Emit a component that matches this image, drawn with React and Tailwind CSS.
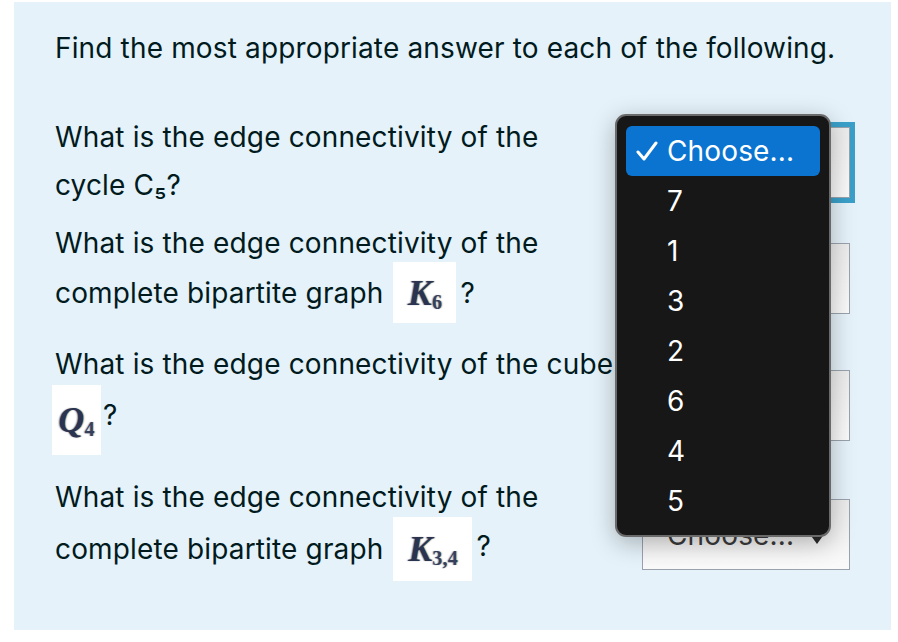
import React from 'react'

const font = { fontFamily: 'Inter, "Noto Sans", sans-serif' }

function MathBox({ main, sub, className }) {
    return (
        <span className={`inline-flex items-center justify-center bg-white ${className}`}>
            <span className="font-bold italic text-[36px] leading-none text-[#2a3450] [text-shadow:1px_0_1px_rgba(180,110,40,0.5),-1px_0_1px_rgba(60,110,200,0.5)]" style={{ fontFamily: '"Liberation Serif", serif' }}>
                {main}
            </span>
            <span className="font-bold text-[20px] leading-none text-[#34405c] mt-[18px] [text-shadow:1px_0_1px_rgba(180,110,40,0.4),-1px_0_1px_rgba(60,110,200,0.4)]" style={{ fontFamily: '"Liberation Serif", serif' }}>
                {sub}
            </span>
        </span>
    )
}

function FakeSelect({ focused, className }) {
    return (
        <div className={`w-[208px] h-[71px] shrink-0 border-[1.5px] border-[#9aa3ad] bg-gradient-to-b from-[#ececec] to-[#fafafa] flex items-center pl-[24px] pr-[24px] text-[28px] text-[#3b3b3b] ${focused ? 'outline-[5px] outline-[#3aa0c9] outline-offset-0 ring-2 ring-[#7dd0f2]' : ''} ${className}`}>
            <span className="flex-1">Choose...</span>
            <svg width="16" height="12" viewBox="0 0 16 12" className="mt-[8px]"><path d="M0 0 L16 0 L8 11 Z" fill="#2b2b2b" /></svg>
        </div>
    )
}

function App() {
    const options = ['7', '1', '3', '2', '6', '4', '5']
    return (
        <div className="w-[898px] h-[642px] bg-white pl-[14px] pt-[2px]" style={font}>
            <div className="relative w-[877px] h-[628px] bg-[#e5f2f9] pl-[41px] pt-[30px] text-[#001a1e] tracking-[0.15px]">
                <div className="text-[28px] leading-[32px]">Find the most appropriate answer to each of the following.</div>

                {/* question 1 */}
                <div className="flex mt-[49px] text-[28px]">
                    <div className="w-[587px]">
                        <div className="h-[48px] leading-[48px]">What is the edge connectivity of the</div>
                        <div className="h-[48px] leading-[48px]">cycle C₅?</div>
                    </div>
                    <FakeSelect focused className="mt-[14px]" />
                </div>

                {/* question 2 */}
                <div className="flex mt-[10px] text-[28px]">
                    <div className="w-[587px]">
                        <div className="h-[43px] leading-[48px]">What is the edge connectivity of the</div>
                        <div className="h-[61px] flex items-center">
                            <span>complete bipartite graph</span>
                            <MathBox main="K" sub="6" className="w-[63px] h-[61px] ml-[10px] mr-[4px]" />
                            <span>?</span>
                        </div>
                    </div>
                    <FakeSelect className="mt-[24px]" />
                </div>

                {/* question 3 */}
                <div className="flex mt-[17px] text-[28px]">
                    <div className="w-[587px]">
                        <div className="h-[45px] leading-[48px]">What is the edge connectivity of the cube</div>
                        <div className="h-[70px] flex items-center">
                            <MathBox main="Q" sub="4" className="w-[49px] h-[70px] -ml-[3px] mr-[2px]" />
                            <span className="-mt-[10px]">?</span>
                        </div>
                    </div>
                    <FakeSelect className="mt-[30px]" />
                </div>

                {/* question 4 */}
                <div className="flex mt-[18px] text-[28px]">
                    <div className="w-[587px]">
                        <div className="h-[44px] leading-[48px]">What is the edge connectivity of the</div>
                        <div className="h-[64px] flex items-center">
                            <span>complete bipartite graph</span>
                            <MathBox main="K" sub="3,4" className="w-[79px] h-[64px] ml-[10px] mr-[4px]" />
                            <span className="-mt-[6px]">?</span>
                        </div>
                    </div>
                    <FakeSelect className="mt-[26px]" />
                </div>

                {/* open dropdown menu */}
                <div className="absolute left-[601px] top-[112px] w-[216px] h-[423px] rounded-[11px] border-2 border-[#6a6a6a] bg-[#171717] px-[9px] py-[10px] shadow-[0_6px_24px_rgba(0,0,0,0.28)] text-[28px] text-white">
                    <div className="h-[50px] rounded-[6px] bg-[#0a74d0] flex items-center pl-[10px]">
                        <svg width="22" height="22" viewBox="0 0 22 22" className="mr-[9px]">
                            <path d="M2 12 L8 19 L20 3" fill="none" stroke="white" strokeWidth="3" strokeLinecap="round" strokeLinejoin="round" />
                        </svg>
                        <span>Choose...</span>
                    </div>
                    {options.map((o) => (
                        <div key={o} className="h-[50px] flex items-center pl-[41px]">{o}</div>
                    ))}
                </div>
            </div>
        </div>
    )
}

export default App
